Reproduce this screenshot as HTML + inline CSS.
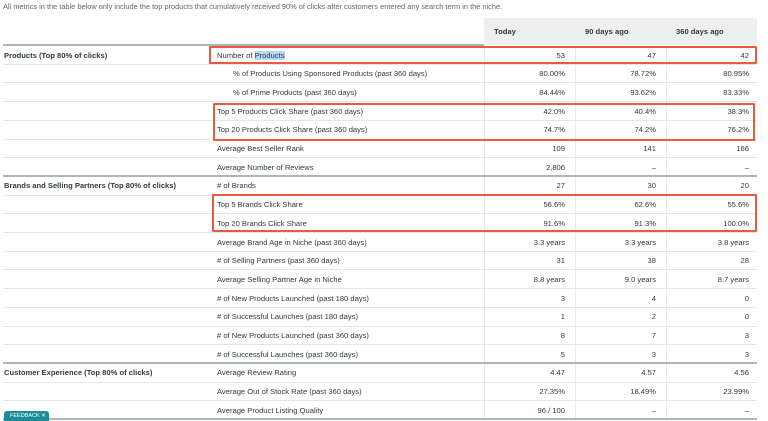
<!DOCTYPE html>
<html><head><meta charset="utf-8"><style>
*{margin:0;padding:0;box-sizing:border-box}
body{width:768px;height:420px;overflow:hidden;background:#fff;font-family:"Liberation Sans",sans-serif;font-size:7.6px;color:#2e3b3f;position:relative}
.a{position:absolute;white-space:nowrap}
.hl{position:absolute;height:1px;background:#e3e6e6}
.tk{position:absolute;height:2px;background:#aeb5b6}
.vl{position:absolute;width:1px;background:#e8eaea;top:45px;height:375px}
.box{position:absolute;border:2px solid #ea5a43;border-radius:1px}
</style></head><body>
<div class="a" style="left:3px;top:2px;color:#666;font-size:7.4px">All metrics in the table below only include the top products that cumulatively received 90% of clicks after customers entered any search term in the niche.</div>
<div class="a" style="left:484px;top:18px;width:273px;height:27px;background:#eef0f0"></div>
<div class="a" style="left:494px;top:27px;font-weight:bold">Today</div>
<div class="a" style="left:585px;top:27px;font-weight:bold">90 days ago</div>
<div class="a" style="left:676px;top:27px;font-weight:bold">360 days ago</div>
<div class="tk" style="left:3px;top:44px;width:481px"></div>
<div class="vl" style="left:484px"></div>
<div class="vl" style="left:575px"></div>
<div class="vl" style="left:666px"></div>
<div id="rows"></div>
<div class="box" style="left:209px;top:46px;width:548px;height:18px"></div>
<div class="box" style="left:213px;top:103px;width:542px;height:38px"></div>
<div class="box" style="left:212px;top:194px;width:545px;height:38px"></div>
<div class="a" style="left:4px;top:411px;width:45px;height:10px;background:#1e8c97;border-radius:3px 3px 0 0;color:#fff;font-size:5.5px;padding:2px 0 0 6px">FEEDBACK ✕</div>
<script>
var R=[
["Products (Top 80% of clicks)","Number of <span style='background:#bcd6f5'>Products</span>","53","47","42",0],
["","% of Products Using Sponsored Products (past 360 days)","80.00%","78.72%","80.95%",1],
["","% of Prime Products (past 360 days)","84.44%","93.62%","83.33%",1],
["","Top 5 Products Click Share (past 360 days)","42.0%","40.4%","38.3%",0],
["","Top 20 Products Click Share (past 360 days)","74.7%","74.2%","76.2%",0],
["","Average Best Seller Rank","109","141","166",0],
["","Average Number of Reviews","2,806","–","–",0],
["Brands and Selling Partners (Top 80% of clicks)","# of Brands","27","30","20",0],
["","Top 5 Brands Click Share","56.6%","62.6%","55.6%",0],
["","Top 20 Brands Click Share","91.6%","91.3%","100.0%",0],
["","Average Brand Age in Niche (past 360 days)","3.3 years","3.3 years","3.8 years",0],
["","# of Selling Partners (past 360 days)","31","38","28",0],
["","Average Selling Partner Age in Niche","8.8 years","9.0 years","8.7 years",0],
["","# of New Products Launched (past 180 days)","3","4","0",0],
["","# of Successful Launches (past 180 days)","1","2","0",0],
["","# of New Products Launched (past 360 days)","8","7","3",0],
["","# of Successful Launches (past 360 days)","5","3","3",0],
["Customer Experience (Top 80% of clicks)","Average Review Rating","4.47","4.57","4.56",0],
["","Average Out of Stock Rate (past 360 days)","27.35%","18.49%","23.99%",0],
["","Average Product Listing Quality","96 / 100","–","–",0]];
var h="";
for(var i=0;i<R.length;i++){var r=R[i];var t=45+i*18.7;var c=t+5.5;
if(r[0])h+="<div class='a' style='left:4px;top:"+c+"px;font-weight:bold'>"+r[0]+"</div>";
h+="<div class='a' style='left:"+(r[5]?233:217)+"px;top:"+c+"px'>"+r[1]+"</div>";
h+="<div class='a' style='right:"+(768-565)+"px;top:"+c+"px'>"+r[2]+"</div>";
h+="<div class='a' style='right:"+(768-656)+"px;top:"+c+"px'>"+r[3]+"</div>";
h+="<div class='a' style='right:"+(768-749)+"px;top:"+c+"px'>"+r[4]+"</div>";
var b=Math.round(t+18.7);
if(i==6||i==16||i==19)h+="<div class='tk' style='left:3px;top:"+(b-1)+"px;width:754px'></div>";
else h+="<div class='hl' style='left:3px;top:"+b+"px;width:754px'></div>";}
document.getElementById("rows").innerHTML=h;
</script>
</body></html>
